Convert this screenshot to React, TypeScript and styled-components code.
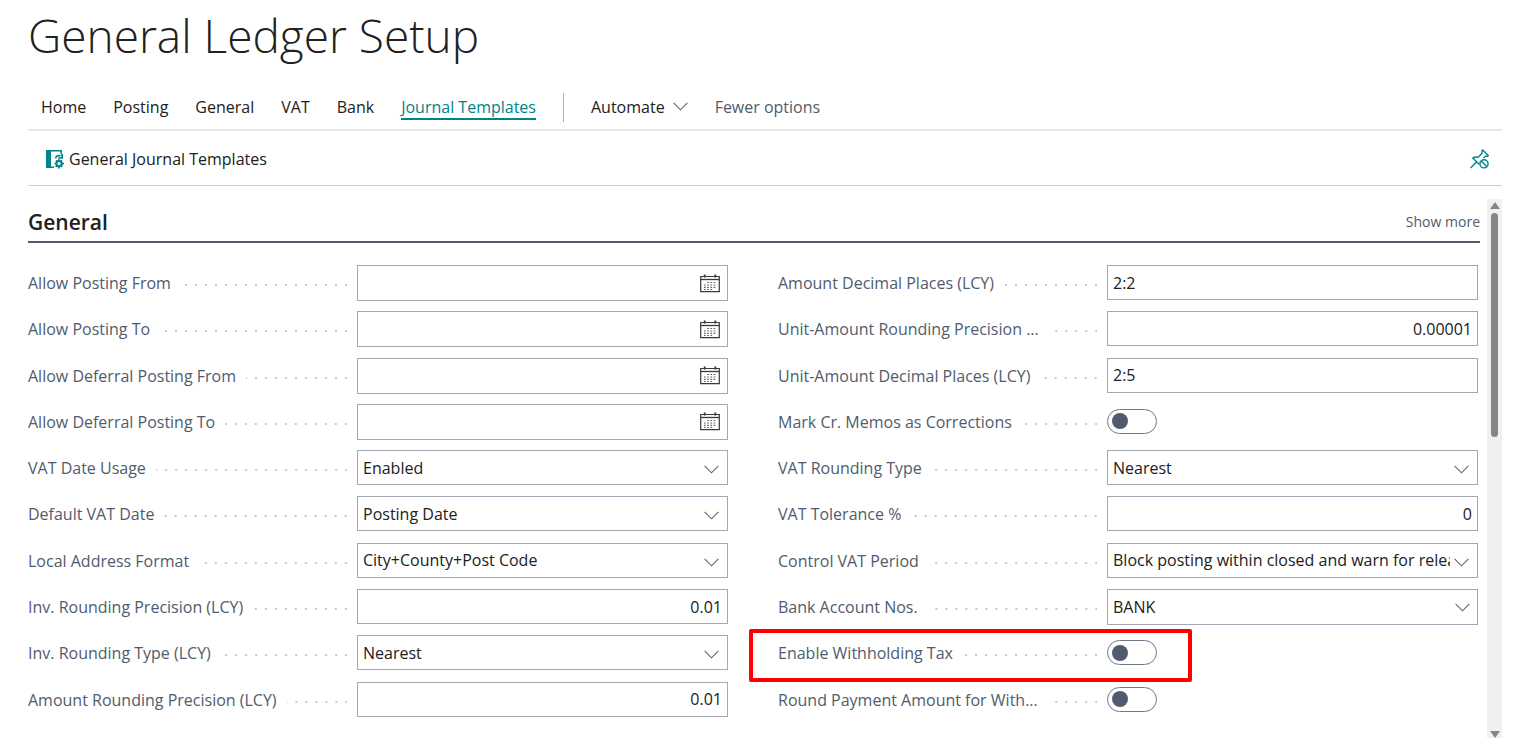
import React, { useId } from "react";
import styled, { createGlobalStyle, css } from "styled-components";

const ink = "#212121";
const slate = "#505c6d";
const line = "#a3a9b4";
const teal = "#00838a";

const GlobalStyle = createGlobalStyle`
  *, *::before, *::after { box-sizing: border-box; }
  body {
    margin: 0;
    background: #fff;
    color: ${ink};
    font-family: "Open Sans", "Noto Sans", sans-serif;
    font-size: 16px;
    line-height: 24px;
  }
  button, input, select { font: inherit; color: inherit; margin: 0; }
`;

const Page = styled.div`
  display: flex;
  flex-direction: column;
  min-height: 100vh;
  padding: 0 34px 0 28px;
`;

const Title = styled.h1`
  margin: 0;
  font-size: 46px;
  font-weight: 300;
  line-height: 70px;
  white-space: nowrap;
`;

const Menu = styled.nav`
  display: flex;
  align-items: center;
  gap: 27px;
  height: 61px;
  padding: 16px 13px 0;
  border-bottom: 2px solid #e6e7eb;
  white-space: nowrap;
`;

const MenuItem = styled.button<{ $active?: boolean; $muted?: boolean }>`
  display: flex;
  align-items: center;
  gap: 8px;
  padding: 0;
  border: 0;
  border-bottom: 2px solid transparent;
  background: none;
  line-height: 22px;
  ${(p) => p.$muted && css`color: ${slate};`}
  ${(p) => p.$active && css`color: ${teal}; border-color: ${teal};`}
`;

const MenuDivider = styled.span`
  width: 1px;
  height: 29px;
  background: #a9b0bd;
`;

const Actions = styled.div`
  display: flex;
  align-items: center;
  justify-content: space-between;
  height: 55px;
  padding: 2px 13px 0 18px;
  border-bottom: 1px solid #cfcfcf;
`;

const Action = styled.button`
  display: flex;
  align-items: center;
  gap: 5px;
  padding: 0;
  border: 0;
  background: none;
`;

const Content = styled.div`
  display: flex;
  flex: 1;
  gap: 7px;
`;

const Section = styled.section`
  flex: 1;
  min-width: 0;
  padding-top: 22px;
`;

const SectionHeader = styled.header`
  display: flex;
  align-items: center;
  justify-content: space-between;
  height: 35px;
  padding-bottom: 5px;
  border-bottom: 2px solid ${slate};
`;

const SectionTitle = styled.h2`
  margin: 0;
  font-size: 21px;
  font-weight: 600;
  line-height: 30px;
`;

const ShowMore = styled.button`
  padding: 0;
  border: 0;
  background: none;
  color: ${slate};
  font-size: 14px;
`;

const Columns = styled.div`
  display: grid;
  grid-template-columns: 1fr 1fr;
  column-gap: 50px;
  padding: 22px 2px 0 0;
`;

const FieldList = styled.div`
  display: grid;
  grid-template-rows: repeat(10, 1fr);
  height: 463px;
  min-width: 0;
`;

const Field = styled.div`
  position: relative;
  display: grid;
  grid-template-columns: 47% 53%;
  align-items: start;
`;

const Caption = styled.div`
  display: flex;
  align-items: center;
  gap: 10px;
  height: 36px;
  padding-right: 10px;
  color: ${slate};
  white-space: nowrap;
`;

const Dots = styled.span`
  flex: 1;
  height: 2px;
  margin-top: 4px;
  background: linear-gradient(to left, #c9c9c9 2px, transparent 2px) right top / 10px 2px repeat-x;
`;

const Box = styled.div<{ $tall?: boolean }>`
  display: flex;
  position: relative;
  height: ${(p) => (p.$tall ? 36 : 35)}px;
  border: 1px solid ${line};
  background: #fff;
`;

const TextInput = styled.input<{ $right?: boolean }>`
  flex: 1;
  min-width: 0;
  padding: 0 5px;
  border: 0;
  outline: 0;
  background: none;
  text-align: ${(p) => (p.$right ? "right" : "left")};
`;

const Select = styled.select`
  flex: 1;
  min-width: 0;
  margin-right: 27px;
  padding: 0 0 0 5px;
  border: 0;
  outline: 0;
  appearance: none;
  background: none;
  overflow: hidden;
  text-overflow: clip;
`;

const SelectArrow = styled.span`
  position: absolute;
  top: 0;
  right: 8px;
  display: flex;
  align-items: center;
  height: 100%;
  padding-top: 4px;
  pointer-events: none;
`;

const BoxButton = styled.button`
  display: flex;
  align-items: center;
  padding: 0 7px;
  border: 0;
  background: none;
`;

const Toggle = styled.input`
  appearance: none;
  display: flex;
  align-items: center;
  width: 50px;
  height: 25px;
  margin: 5px 0 0;
  padding: 0 4px;
  border: 1px solid #6f798a;
  border-radius: 13px;
  background: #fff;
  &::before {
    content: "";
    width: 16px;
    height: 16px;
    border-radius: 50%;
    background: ${slate};
  }
  &:checked { justify-content: flex-end; }
`;

const Callout = styled.div`
  position: absolute;
  top: -6px;
  bottom: 0;
  left: -29px;
  right: 286px;
  border: 4px solid #fe0000;
  border-radius: 2px;
  pointer-events: none;
`;

const ScrollTrack = styled.div`
  display: flex;
  flex-direction: column;
  align-items: center;
  justify-content: space-between;
  width: 15px;
  margin-top: 13px;
  padding-top: 3px;
  background: #f0f0f0;
`;

const ScrollUpper = styled.div`
  display: flex;
  flex-direction: column;
  align-items: center;
  gap: 4px;
`;

const ScrollThumb = styled.div`
  width: 7px;
  height: 224px;
  border-radius: 4px;
  background: #868686;
`;

const Chevron = () => (
  <svg width="15" height="9" viewBox="0 0 15 9" fill="none" stroke="#666" strokeWidth="1.1">
    <path d="M.6.8 7.5 7.8 14.4.8" />
  </svg>
);

const CalendarIcon = () => (
  <svg width="20" height="19" viewBox="0 0 20 19" fill="none" stroke="#3a3a3a">
    <path d="M.7 2.500h18.600v15.200H.7z" strokeWidth="1.200" />
    <path d="M.7 5.500h18.600" strokeWidth="1.300" />
    <path d="M4.700.5v3M15.300.5v3" strokeWidth="1.800" />
    <path
      d="M7.200 8.500h9M4 11h12.200M4 13.300h12.200M4 15.500h9"
      stroke="#666"
      strokeWidth="1.200"
      strokeDasharray="1.700 1.500"
    />
  </svg>
);

const JournalIcon = () => (
  <svg width="18" height="19" viewBox="0 0 18 19" fill="none" stroke={teal}>
    <path d="M0 0h5v18H0z" fill={teal} stroke="none" />
    <path d="M4 .8h11.200v3.400M4 17.200h4" strokeWidth="1.500" />
    <path d="M9.500 8.200c.6-2.300 3-3.300 5-2.200M16.200 4v4h-4" strokeWidth="1.700" />
    <circle cx="13" cy="13.600" r="2.600" strokeWidth="1.900" />
    <path
      d="M13 9.200v1.600M13 16.400V18.600M8.600 13.600h1.600M15.800 13.600h2.200M10 10.500l1 1M15 15.600l1.300 1.300M16 10.500l-1 1M11 15.600l-1.300 1.300"
      strokeWidth="1.900"
    />
  </svg>
);

const UnpinIcon = () => (
  <svg width="19" height="20" viewBox="0 0 19 20" fill="none" stroke={teal} strokeWidth="1.400">
    <path d="M.6 19 6.600 12.800" />
    <path d="M9 15.200 2.800 9c1.700-1.200 3.500-1.300 5.200-.6L12 4.200c-.3-1.200-.1-2.200.7-3.200l5.600 5.600c-1 .7-2 .9-3.100.7l-1.700 1.700" />
    <circle cx="14" cy="14.800" r="4.100" />
    <path d="m11.200 12 5.600 5.600" />
  </svg>
);

const Arrow = ({ down }: { down?: boolean }) => (
  <svg width="10" height="7" viewBox="0 0 10 7" fill="#868686">
    <path d={down ? "M0 0h10L5 7z" : "M0 7h10L5 0z"} />
  </svg>
);

type Kind = "date" | "select" | "lookup" | "text" | "number" | "toggle";
type FieldData = { label: string; kind: Kind; value?: string; marked?: boolean };

const leftFields: FieldData[] = [
  { label: "Allow Posting From", kind: "date" },
  { label: "Allow Posting To", kind: "date" },
  { label: "Allow Deferral Posting From", kind: "date" },
  { label: "Allow Deferral Posting To", kind: "date" },
  { label: "VAT Date Usage", kind: "select", value: "Enabled" },
  { label: "Default VAT Date", kind: "select", value: "Posting Date" },
  { label: "Local Address Format", kind: "select", value: "City+County+Post Code" },
  { label: "Inv. Rounding Precision (LCY)", kind: "number", value: "0.01" },
  { label: "Inv. Rounding Type (LCY)", kind: "select", value: "Nearest" },
  { label: "Amount Rounding Precision (LCY)", kind: "number", value: "0.01" },
];

const rightFields: FieldData[] = [
  { label: "Amount Decimal Places (LCY)", kind: "text", value: "2:2" },
  { label: "Unit-Amount Rounding Precision ...", kind: "number", value: "0.00001" },
  { label: "Unit-Amount Decimal Places (LCY)", kind: "text", value: "2:5" },
  { label: "Mark Cr. Memos as Corrections", kind: "toggle" },
  { label: "VAT Rounding Type", kind: "select", value: "Nearest" },
  { label: "VAT Tolerance %", kind: "number", value: "0" },
  { label: "Control VAT Period", kind: "select", value: "Block posting within closed and warn for released" },
  { label: "Bank Account Nos.", kind: "lookup", value: "BANK" },
  { label: "Enable Withholding Tax", kind: "toggle", marked: true },
  { label: "Round Payment Amount for With...", kind: "toggle" },
];

function Control({ id, kind, value }: { id: string; kind: Kind; value?: string }) {
  if (kind === "toggle") return <Toggle id={id} type="checkbox" role="switch" />;
  if (kind === "select")
    return (
      <Box>
        <Select id={id} defaultValue={value}>
          <option>{value}</option>
        </Select>
        <SelectArrow><Chevron /></SelectArrow>
      </Box>
    );
  const composite = kind === "date" || kind === "lookup";
  return (
    <Box $tall={composite}>
      <TextInput id={id} type="text" defaultValue={value} $right={kind === "number"} />
      {composite && (
        <BoxButton type="button" aria-label={kind === "date" ? "Choose date" : "Look up"}>
          {kind === "date" ? <CalendarIcon /> : <Chevron />}
        </BoxButton>
      )}
    </Box>
  );
}

function FieldRow({ label, kind, value, marked }: FieldData) {
  const id = useId();
  return (
    <Field>
      <Caption>
        <label htmlFor={id}>{label}</label>
        <Dots />
      </Caption>
      <Control id={id} kind={kind} value={value} />
      {marked && <Callout />}
    </Field>
  );
}

export default function App() {
  return (
    <>
      <GlobalStyle />
      <Page>
        <Title>General Ledger Setup</Title>
        <Menu>
          {["Home", "Posting", "General", "VAT", "Bank"].map((name) => (
            <MenuItem key={name} type="button">{name}</MenuItem>
          ))}
          <MenuItem type="button" $active>Journal Templates</MenuItem>
          <MenuDivider />
          <MenuItem type="button">Automate <Chevron /></MenuItem>
          <MenuItem type="button" $muted>Fewer options</MenuItem>
        </Menu>
        <Actions>
          <Action type="button"><JournalIcon />General Journal Templates</Action>
          <Action type="button" aria-label="Unpin"><UnpinIcon /></Action>
        </Actions>
        <Content>
          <Section>
            <SectionHeader>
              <SectionTitle>General</SectionTitle>
              <ShowMore type="button">Show more</ShowMore>
            </SectionHeader>
            <Columns>
              <FieldList>{leftFields.map((f) => <FieldRow key={f.label} {...f} />)}</FieldList>
              <FieldList>{rightFields.map((f) => <FieldRow key={f.label} {...f} />)}</FieldList>
            </Columns>
          </Section>
          <ScrollTrack>
            <ScrollUpper>
              <Arrow />
              <ScrollThumb />
            </ScrollUpper>
            <Arrow down />
          </ScrollTrack>
        </Content>
      </Page>
    </>
  );
}
